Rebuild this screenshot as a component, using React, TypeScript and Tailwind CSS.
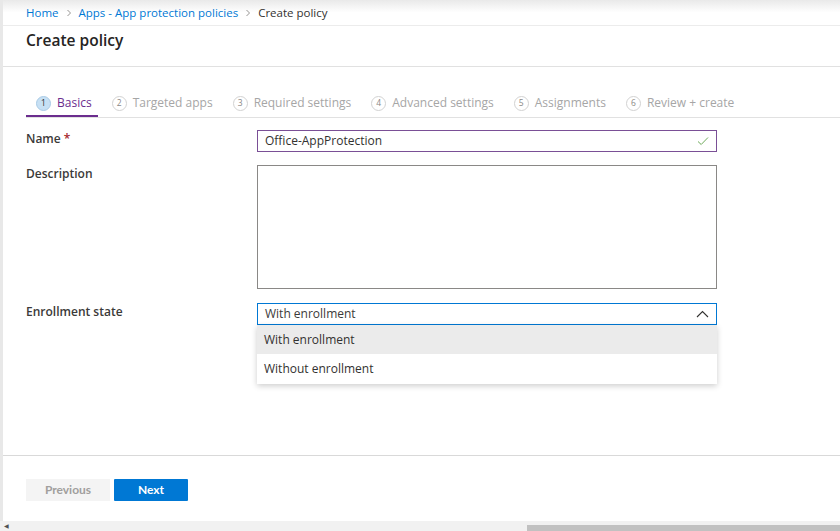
import React from 'react'

const tabs = [
  { n: 1, label: 'Basics' },
  { n: 2, label: 'Targeted apps' },
  { n: 3, label: 'Required settings' },
  { n: 4, label: 'Advanced settings' },
  { n: 5, label: 'Assignments' },
  { n: 6, label: 'Review + create' },
]

function Chevron() {
  return (
    <svg width="8" height="8" viewBox="0 0 8 8" className="mx-[6px]">
      <path d="M2.5 1 L5.5 4 L2.5 7" fill="none" stroke="#8a8886" strokeWidth="0.9" />
    </svg>
  )
}

export default function App() {
  return (
    <div
      className="w-[840px] h-[531px] overflow-hidden bg-white flex flex-col text-[#323130]"
      style={{ fontFamily: '"Open Sans", "Noto Sans", sans-serif' }}
    >
      <div className="flex flex-1 min-h-0">
        <div className="w-[3px] bg-[#e8e8e8] shrink-0" />
        <div className="flex-1 flex flex-col min-w-0">
          {/* breadcrumb */}
          <div className="h-[26px] flex items-center pl-[23px] text-[11.5px] border-b border-[#ececec] bg-gradient-to-b from-[#e9e9e9] via-white to-white">
            <span className="text-[#0078d4]">Home</span>
            <Chevron />
            <span className="text-[#0078d4]">Apps - App protection policies</span>
            <Chevron />
            <span className="text-[#323130]">Create policy</span>
          </div>
          {/* title */}
          <div className="h-[41px] border-b border-[#e1e1e1] pl-[23px] pt-[3px]">
            <h1 className="text-[15.5px] font-semibold text-[#252423]">Create policy</h1>
          </div>

          {/* tabs */}
          <div className="mt-[24px] ml-[23px] flex items-end border-b border-[#e1e1e1] h-[27px]">
            {tabs.map((t, i) => {
              const active = i === 0
              return (
                <div
                  key={t.n}
                  className={`flex items-center h-full pl-[10px] pr-[6px] mr-[4px] ${
                    active ? 'border-b-2 border-[#6b2d8e]' : 'border-b-2 border-transparent'
                  }`}
                >
                  <span
                    className={`w-[15px] h-[15px] rounded-full flex items-center justify-center text-[8.5px] leading-none mr-[6px] ${
                      active
                        ? 'bg-[#c7e0f4] border border-[#a9cbe6] text-[#323130]'
                        : 'border border-[#d2d2d2] text-[#8a8886]'
                    }`}
                  >
                    {t.n}
                  </span>
                  <span className={`text-[12px] ${active ? 'text-[#6b2d8e]' : 'text-[#a6a6a6]'}`}>
                    {t.label}
                  </span>
                </div>
              )
            })}
          </div>

          {/* form */}
          <div className="pl-[23px] pr-[123px] pt-[12px] flex flex-col">
            <div className="flex">
              <div className="w-[231px] text-[12px] font-semibold text-[#3b3a39]">
                Name <span className="text-[#a4262c]">*</span>
              </div>
              <div className="flex-1 h-[22px] border border-[#7a4f96] flex items-center px-[7px] text-[12px] justify-between">
                <span>Office-AppProtection</span>
                <svg width="12" height="10" viewBox="0 0 12 10">
                  <path d="M1 5.5 L4.2 8.5 L11 1.5" fill="none" stroke="#6fab5b" strokeWidth="1" />
                </svg>
              </div>
            </div>
            <div className="flex mt-[13px]">
              <div className="w-[231px] text-[12px] font-semibold text-[#3b3a39]">Description</div>
              <div className="flex-1 h-[124px] border border-[#8a8886]" />
            </div>
            <div className="flex mt-[14px]">
              <div className="w-[231px] text-[12px] font-semibold text-[#3b3a39]">Enrollment state</div>
              <div className="flex-1 relative">
                <div className="h-[22px] border border-[#0078d4] flex items-center justify-between px-[7px] text-[12px] text-[#3b3a39]">
                  <span>With enrollment</span>
                  <svg width="13" height="8" viewBox="0 0 13 8">
                    <path d="M1 7 L6.5 1.5 L12 7" fill="none" stroke="#323130" strokeWidth="1.1" />
                  </svg>
                </div>
                <div className="absolute left-0 right-0 top-[22px] bg-white shadow-[0_2px_6px_rgba(0,0,0,0.2)] text-[12px] text-[#323130]">
                  <div className="h-[29px] bg-[#ebebeb] flex items-center px-[7px]">With enrollment</div>
                  <div className="h-[30px] flex items-center px-[7px]">Without enrollment</div>
                </div>
              </div>
            </div>
          </div>

          <div className="flex-1" />
          {/* footer */}
          <div className="border-t border-[#d9d9d9] h-[66px] flex items-start pt-[23px] pl-[23px] gap-[4px]" style={{ fontFamily: 'Lato, "Open Sans", sans-serif' }}>
            <button className="w-[84px] h-[22px] bg-[#f4f4f4] text-[#a19f9d] text-[12px] font-bold">Previous</button>
            <button className="w-[74px] h-[22px] bg-[#0078d4] text-white text-[12px] font-bold rounded-[1px]">Next</button>
          </div>
        </div>
      </div>
      {/* horizontal scrollbar */}
      <div className="h-[10px] flex bg-[#f1f1f1] shrink-0">
        <div className="w-[12px] flex items-center justify-center text-[6px] text-[#505050]">◀</div>
        <div className="w-[515px]" />
        <div className="flex-1 mt-[4px] bg-[#c1c1c1]" />
      </div>
    </div>
  )
}
